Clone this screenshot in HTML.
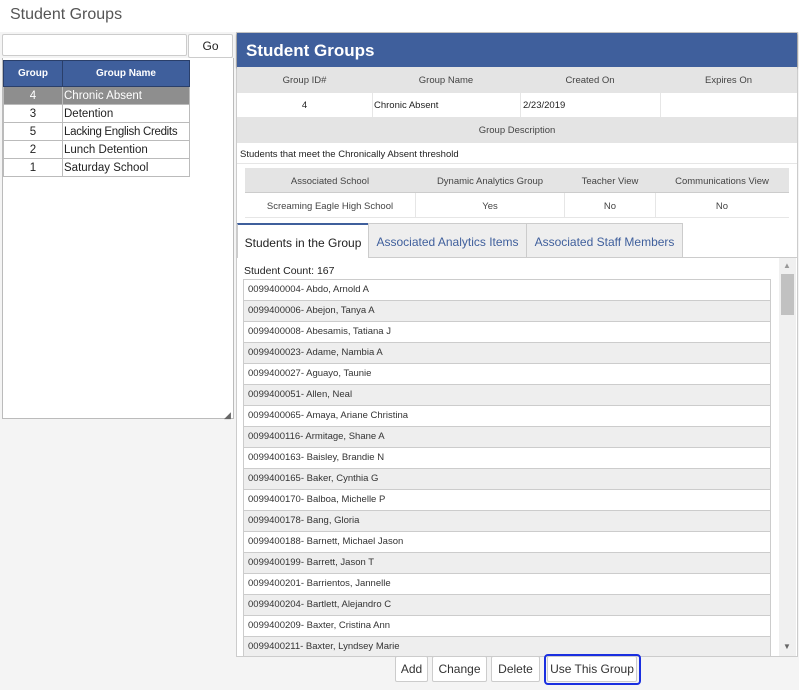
<!DOCTYPE html>
<html><head><style>
*{box-sizing:border-box;margin:0;padding:0}
body{width:799px;height:690px;background:#f4f4f4;font-family:"Liberation Sans",sans-serif;position:relative;overflow:hidden;color:#222}
.abs{position:absolute}
.title{left:0;top:0;width:799px;height:32px;background:#fff}
.title span{position:absolute;left:10px;top:6px;font-size:16px;color:#555}
.inp{left:2px;top:34px;width:185px;height:22px;border:1px solid #ccc;background:#fff;border-radius:2px}
.go{left:188px;top:34px;width:45px;height:24px;border:1px solid #ccc;background:#fff;font-size:12px;text-align:center;line-height:22px;border-radius:2px}
.lp{left:2px;top:58px;width:232px;height:361px;background:#fff;border:1px solid #bbb;border-top:none}
.lt{left:3px;top:60px;border-collapse:collapse;font-size:11.5px;table-layout:fixed}
.lt td,.lt th{border:1px solid #bbb;height:18px;padding:0 1px;white-space:nowrap;overflow:hidden}
.lt th{background:#3f5f9c;color:#fff;font-size:10px;height:26px;border:1px solid #2a3f6a}
.lt td:first-child{text-align:center}
.sel td{background:#8e8e8e;color:#fff}
.rp{left:236px;top:32px;width:562px;height:625px;background:#fff;border:1px solid #ccc}
.hdr{left:237px;top:33px;width:560px;height:34px;background:#3f5f9c;color:#fff;font-size:17px;font-weight:bold;padding:8px 9px;box-shadow:0 1px 2px #555}
.g{background:#e4e4e4}
.cell{position:absolute;font-size:9.5px;color:#444;text-align:center;white-space:nowrap}
.tab{top:223px;height:35px;font-size:12px;line-height:37px;text-align:center;border:1px solid #ccc;background:#eee;color:#3f5f9c}
.row{position:absolute;left:243px;width:528px;height:21px;border:1px solid #ccc;border-top:none;font-size:9.5px;line-height:20px;padding-left:4px;color:#333}
.btn{top:656px;height:26px;border:1px solid #ccc;background:#fff;font-size:12px;text-align:center;line-height:24px;border-radius:2px;color:#333}
</style></head><body>
<div class="abs title"><span>Student Groups</span></div>
<div class="abs inp"></div><div class="abs go">Go</div>
<div class="abs lp"></div>
<table class="abs lt">
<colgroup><col style="width:59px"><col style="width:127px"></colgroup>
<tr><th>Group</th><th>Group Name</th></tr>
<tr class="sel"><td>4</td><td>Chronic Absent</td></tr>
<tr><td>3</td><td>Detention</td></tr>
<tr><td>5</td><td style="letter-spacing:-0.3px">Lacking English Credits</td></tr>
<tr><td>2</td><td>Lunch Detention</td></tr>
<tr><td>1</td><td>Saturday School</td></tr>
</table>
<div class="abs" style="left:224px;top:410px;font-size:9px;color:#666">◢</div>
<div class="abs rp"></div>
<div class="abs hdr">Student Groups</div>
<div class="abs g" style="left:237px;top:67px;width:560px;height:26px"></div>
<div class="cell" style="left:237px;top:75px;width:135px">Group ID#</div>
<div class="cell" style="left:372px;top:75px;width:148px">Group Name</div>
<div class="cell" style="left:520px;top:75px;width:140px">Created On</div>
<div class="cell" style="left:660px;top:75px;width:137px">Expires On</div>
<div class="abs" style="left:372px;top:93px;width:1px;height:24px;background:#e6e6e6"></div>
<div class="abs" style="left:520px;top:93px;width:1px;height:24px;background:#e6e6e6"></div>
<div class="abs" style="left:660px;top:93px;width:1px;height:24px;background:#e6e6e6"></div>
<div class="cell" style="left:237px;top:100px;width:135px;color:#222">4</div>
<div class="cell" style="left:374px;top:100px;text-align:left;color:#222">Chronic Absent</div>
<div class="cell" style="left:523px;top:100px;text-align:left;color:#222">2/23/2019</div>
<div class="abs g" style="left:237px;top:117px;width:560px;height:26px"></div>
<div class="cell" style="left:237px;top:125px;width:560px">Group Description</div>
<div class="abs" style="left:237px;top:163px;width:560px;height:1px;background:#e6e6e6"></div>
<div class="cell" style="left:240px;top:149px;text-align:left;color:#222">Students that meet the Chronically Absent threshold</div>
<div class="abs g" style="left:245px;top:168px;width:544px;height:25px;border-bottom:1px solid #ccc"></div>
<div class="cell" style="left:245px;top:176px;width:170px">Associated School</div>
<div class="cell" style="left:415px;top:176px;width:150px">Dynamic Analytics Group</div>
<div class="cell" style="left:565px;top:176px;width:90px">Teacher View</div>
<div class="cell" style="left:655px;top:176px;width:134px">Communications View</div>
<div class="abs" style="left:245px;top:217px;width:544px;height:1px;background:#e6e6e6"></div>
<div class="abs" style="left:415px;top:193px;width:1px;height:24px;background:#e6e6e6"></div>
<div class="abs" style="left:564px;top:193px;width:1px;height:24px;background:#e6e6e6"></div>
<div class="abs" style="left:655px;top:193px;width:1px;height:24px;background:#e6e6e6"></div>
<div class="cell" style="left:245px;top:201px;width:170px">Screaming Eagle High School</div>
<div class="cell" style="left:415px;top:201px;width:150px">Yes</div>
<div class="cell" style="left:565px;top:201px;width:90px">No</div>
<div class="cell" style="left:655px;top:201px;width:134px">No</div>
<div class="abs tab" style="left:237px;width:132px;background:#fff;color:#222;border-top:2px solid #3f5f9c;border-bottom:none">Students in the Group</div>
<div class="abs tab" style="left:368px;width:159px">Associated Analytics Items</div>
<div class="abs tab" style="left:526px;width:157px">Associated Staff Members</div>
<div class="abs" style="left:683px;top:257px;width:114px;height:1px;background:#ccc"></div>
<div class="abs" style="left:244px;top:265px;font-size:10.5px;color:#222">Student Count: 167</div>
<div class="abs" style="left:779px;top:258px;width:17px;height:398px;background:#f0f0f0"></div>
<div class="abs" style="left:781px;top:274px;width:13px;height:41px;background:#c1c1c1"></div>
<div class="abs" style="left:783px;top:261px;font-size:8px;color:#999">▲</div>
<div class="abs" style="left:783px;top:642px;font-size:8px;color:#666">▼</div>
<div class="row" style="top:279px;height:22px;border-top:1px solid #ccc">0099400004- Abdo, Arnold A</div>
<div class="row" style="top:301px;background:#eee">0099400006- Abejon, Tanya A</div>
<div class="row" style="top:322px">0099400008- Abesamis, Tatiana J</div>
<div class="row" style="top:343px;background:#eee">0099400023- Adame, Nambia A</div>
<div class="row" style="top:364px">0099400027- Aguayo, Taunie</div>
<div class="row" style="top:385px;background:#eee">0099400051- Allen, Neal</div>
<div class="row" style="top:406px">0099400065- Amaya, Ariane Christina</div>
<div class="row" style="top:427px;background:#eee">0099400116- Armitage, Shane A</div>
<div class="row" style="top:448px">0099400163- Baisley, Brandie N</div>
<div class="row" style="top:469px;background:#eee">0099400165- Baker, Cynthia G</div>
<div class="row" style="top:490px">0099400170- Balboa, Michelle P</div>
<div class="row" style="top:511px;background:#eee">0099400178- Bang, Gloria</div>
<div class="row" style="top:532px">0099400188- Barnett, Michael Jason</div>
<div class="row" style="top:553px;background:#eee">0099400199- Barrett, Jason T</div>
<div class="row" style="top:574px">0099400201- Barrientos, Jannelle</div>
<div class="row" style="top:595px;background:#eee">0099400204- Bartlett, Alejandro C</div>
<div class="row" style="top:616px">0099400209- Baxter, Cristina Ann</div>
<div class="row" style="top:637px;height:19px;background:#eee;border-bottom:none">0099400211- Baxter, Lyndsey Marie</div>
<div class="abs btn" style="left:395px;width:33px">Add</div>
<div class="abs btn" style="left:432px;width:55px">Change</div>
<div class="abs btn" style="left:491px;width:49px">Delete</div>
<div class="abs" style="left:544px;top:654px;width:97px;height:31px;border:2px solid #1a2fe0;border-radius:4px"></div>
<div class="abs btn" style="left:547px;width:90px">Use This Group</div>
</body></html>
